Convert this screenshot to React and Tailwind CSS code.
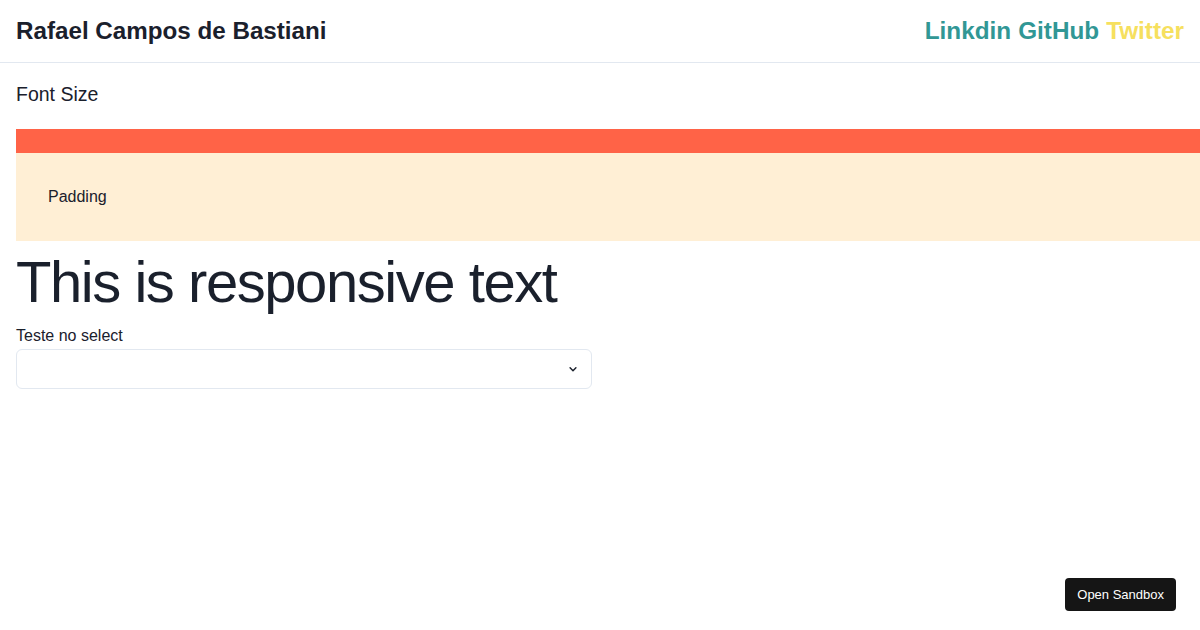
export default function App() {
  return (
    <div className="relative min-h-[630px] overflow-hidden bg-white font-['Liberation_Sans',Arial,sans-serif] text-[#1a202c]">
      <header className="flex h-[63px] items-center justify-between border-b border-[#e2e8f0] px-4">
        <h1 className="text-[24.2px] font-bold">Rafael Campos de Bastiani</h1>
        <nav className="flex gap-[7px] text-[24.3px] font-bold">
          <a className="text-[#319795]">Linkdin</a>
          <a className="text-[#319795]">GitHub</a>
          <a className="text-[#f6e05e]">Twitter</a>
        </nav>
      </header>

      <div className="pl-4">
        <p className="mt-4 text-[19.5px] leading-[30px]">Font Size</p>

        <div className="mt-5 h-6 bg-[#ff6347]" />
        <div className="bg-[#ffefd5] p-8">
          <p className="leading-6">Padding</p>
        </div>

        <p className="mt-[6px] text-[58px] leading-[1.2] tracking-tight">This is responsive text</p>

        <div className="mt-[10px] w-[576px]">
          <label className="block leading-[18px]">Teste no select</label>
          <div className="mt-[4px] flex h-10 items-center justify-end rounded-md border border-[#e2e8f0] pr-[13px]">
            <svg width="10" height="10" viewBox="0 0 24 24" fill="none" stroke="#1a202c" strokeWidth="3.5" strokeLinecap="round" strokeLinejoin="round">
              <path d="M5 9l7 7 7-7" />
            </svg>
          </div>
        </div>
      </div>

      <button className="absolute bottom-[19px] right-[24px] h-[33px] rounded-[4px] bg-[#151515] px-3 text-[13px] text-white">
        Open Sandbox
      </button>
    </div>
  )
}
